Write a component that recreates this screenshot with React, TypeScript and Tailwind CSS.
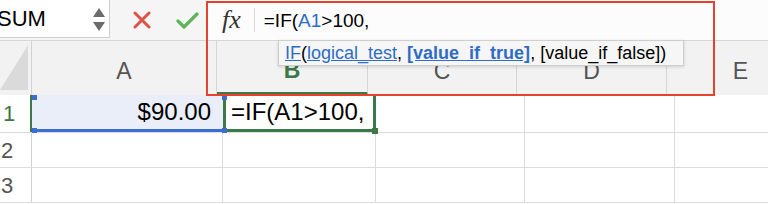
import React from 'react';

const FONT = { fontFamily: '"Liberation Sans", Arial, sans-serif' };

function Corner({ className }: { className: string }) {
  return <div className={`absolute w-[5px] h-[5px] bg-[#3a6fd2] ${className}`} />;
}

export default function App() {
  return (
    <div className="relative w-[768px] h-[204px] overflow-hidden bg-white text-black" style={FONT}>
      {/* toolbar */}
      <div className="flex h-[41px] bg-[#f5f5f5] border-b border-[#d6d6d6]">
        <div className="relative w-[110px] h-[38px] bg-white border-r border-b border-[#cfcfcf] flex items-center">
          <span className="-ml-[3px] text-[22px] leading-none">SUM</span>
          <div className="absolute right-[4px] top-[8px] flex flex-col gap-[5px]">
            <svg width="12" height="9" viewBox="0 0 12 9"><path d="M6 0 L12 9 L0 9 Z" fill="#6b6b6b" /></svg>
            <svg width="12" height="9" viewBox="0 0 12 9"><path d="M0 0 L12 0 L6 9 Z" fill="#6b6b6b" /></svg>
          </div>
        </div>
        <div className="w-[96px] flex items-center">
          <svg className="ml-[23px]" width="18" height="18" viewBox="0 0 18 18">
            <path d="M2 2 L16 16 M16 2 L2 16" stroke="#dc5448" strokeWidth="3" strokeLinecap="round" />
          </svg>
          <svg className="ml-[25px]" width="23" height="19" viewBox="0 0 23 19">
            <path d="M2 10 L8 16 L21 3" fill="none" stroke="#5fb35a" strokeWidth="3.2" strokeLinecap="round" strokeLinejoin="round" />
          </svg>
        </div>
        <div className="flex-1 bg-[#fcfcfc] flex items-center">
          <span className="ml-[16px] text-[26px] italic leading-none text-[#333]" style={{ fontFamily: '"Liberation Serif", "Times New Roman", serif' }}>fx</span>
          <div className="ml-[13px] w-px h-[24px] bg-[#dadada]" />
          <span className="ml-[9px] text-[19px] leading-none">
            =IF(<span className="text-[#2e6cc7]">A1</span>&gt;100,
          </span>
        </div>
      </div>

      {/* column headers */}
      <div className="flex h-[54px] bg-[#f2f2f2] text-[23px] text-[#555]">
        <div className="w-[32px] border-r border-[#d2d2d2] flex items-end pb-[5px] pt-[4px]">
          <svg width="28" height="45" viewBox="0 0 28 45"><path d="M28 0 L28 45 L0 45 Z" fill="#dadada" /></svg>
        </div>
        <div className="w-[185px] border-r border-[#d6d6d6] flex items-center justify-center pt-[6px]">A</div>
        <div className="w-[151px] border-r border-[#d6d6d6] border-b-[3px] border-b-[#3b7a46] flex items-center justify-center pt-[8px] font-bold text-[#3b7a46]">B</div>
        <div className="w-[149px] border-r border-[#d6d6d6] flex items-center justify-center pt-[6px]">C</div>
        <div className="w-[150px] border-r border-[#d6d6d6] flex items-center justify-center pt-[6px]">D</div>
        <div className="flex-1 flex items-center justify-center pt-[6px] pl-[46px]">E</div>
      </div>

      {/* rows */}
      <div className="flex h-[38px] border-b border-[#dcdcdc]">
        <div className="w-[32px] border-r-2 border-[#3b7a46] flex items-center pl-[3px] text-[22px] text-[#3b7a46]">1</div>
        <div className="relative w-[191px] bg-[#e9eef9] border-b-[3px] border-[#3a6fd2] flex items-center justify-end pr-[12px] text-[24px]">
          $90.00
          <Corner className="left-0 top-0" />
          <Corner className="left-0 -bottom-[4px]" />
        </div>
        <div className="relative w-[153px] border-x-[3px] border-b-[3px] border-[#3b7a46] flex items-center pl-[5px] text-[24px]">
          =IF(A1&gt;100,
          <Corner className="-left-[4px] top-0" />
          <Corner className="-left-[4px] -bottom-[4px]" />
          <div className="absolute -right-[5px] -bottom-[5px] w-[6px] h-[6px] bg-[#3b7a46]" />
        </div>
        <div className="w-[149px] border-r border-[#dcdcdc]" />
        <div className="w-[150px] border-r border-[#dcdcdc]" />
        <div className="flex-1" />
      </div>
      {[2, 3].map((n) => (
        <div key={n} className="flex h-[35px] border-b border-[#dcdcdc]">
          <div className="w-[32px] border-r border-[#d2d2d2] flex items-center pl-[1px] text-[22px] text-[#555]">{n}</div>
          <div className="w-[191px] border-r border-[#dcdcdc]" />
          <div className="w-[153px] border-r border-[#dcdcdc]" />
          <div className="w-[149px] border-r border-[#dcdcdc]" />
          <div className="w-[150px] border-r border-[#dcdcdc]" />
          <div className="flex-1" />
        </div>
      ))}

      {/* highlight box */}
      <div className="absolute left-[206px] top-[1px] w-[509px] h-[95px] border-2 border-[#e8412c] pointer-events-none" />

      {/* function tooltip */}
      <div className="absolute left-[278px] top-[40px] w-[406px] h-[26px] px-[6px] flex items-center bg-[#f6f6f6] border border-[#cfcfcf] shadow-[0_1px_3px_rgba(0,0,0,0.15)] text-[18px] leading-none whitespace-nowrap">
        <span className="text-[#2e6cc7] underline">IF</span>(
        <span className="text-[#2e6cc7] underline">logical_test</span>,&nbsp;
        <span className="text-[#2e6cc7] underline font-bold">[value_if_true]</span>, [value_if_false])
      </div>
    </div>
  );
}
